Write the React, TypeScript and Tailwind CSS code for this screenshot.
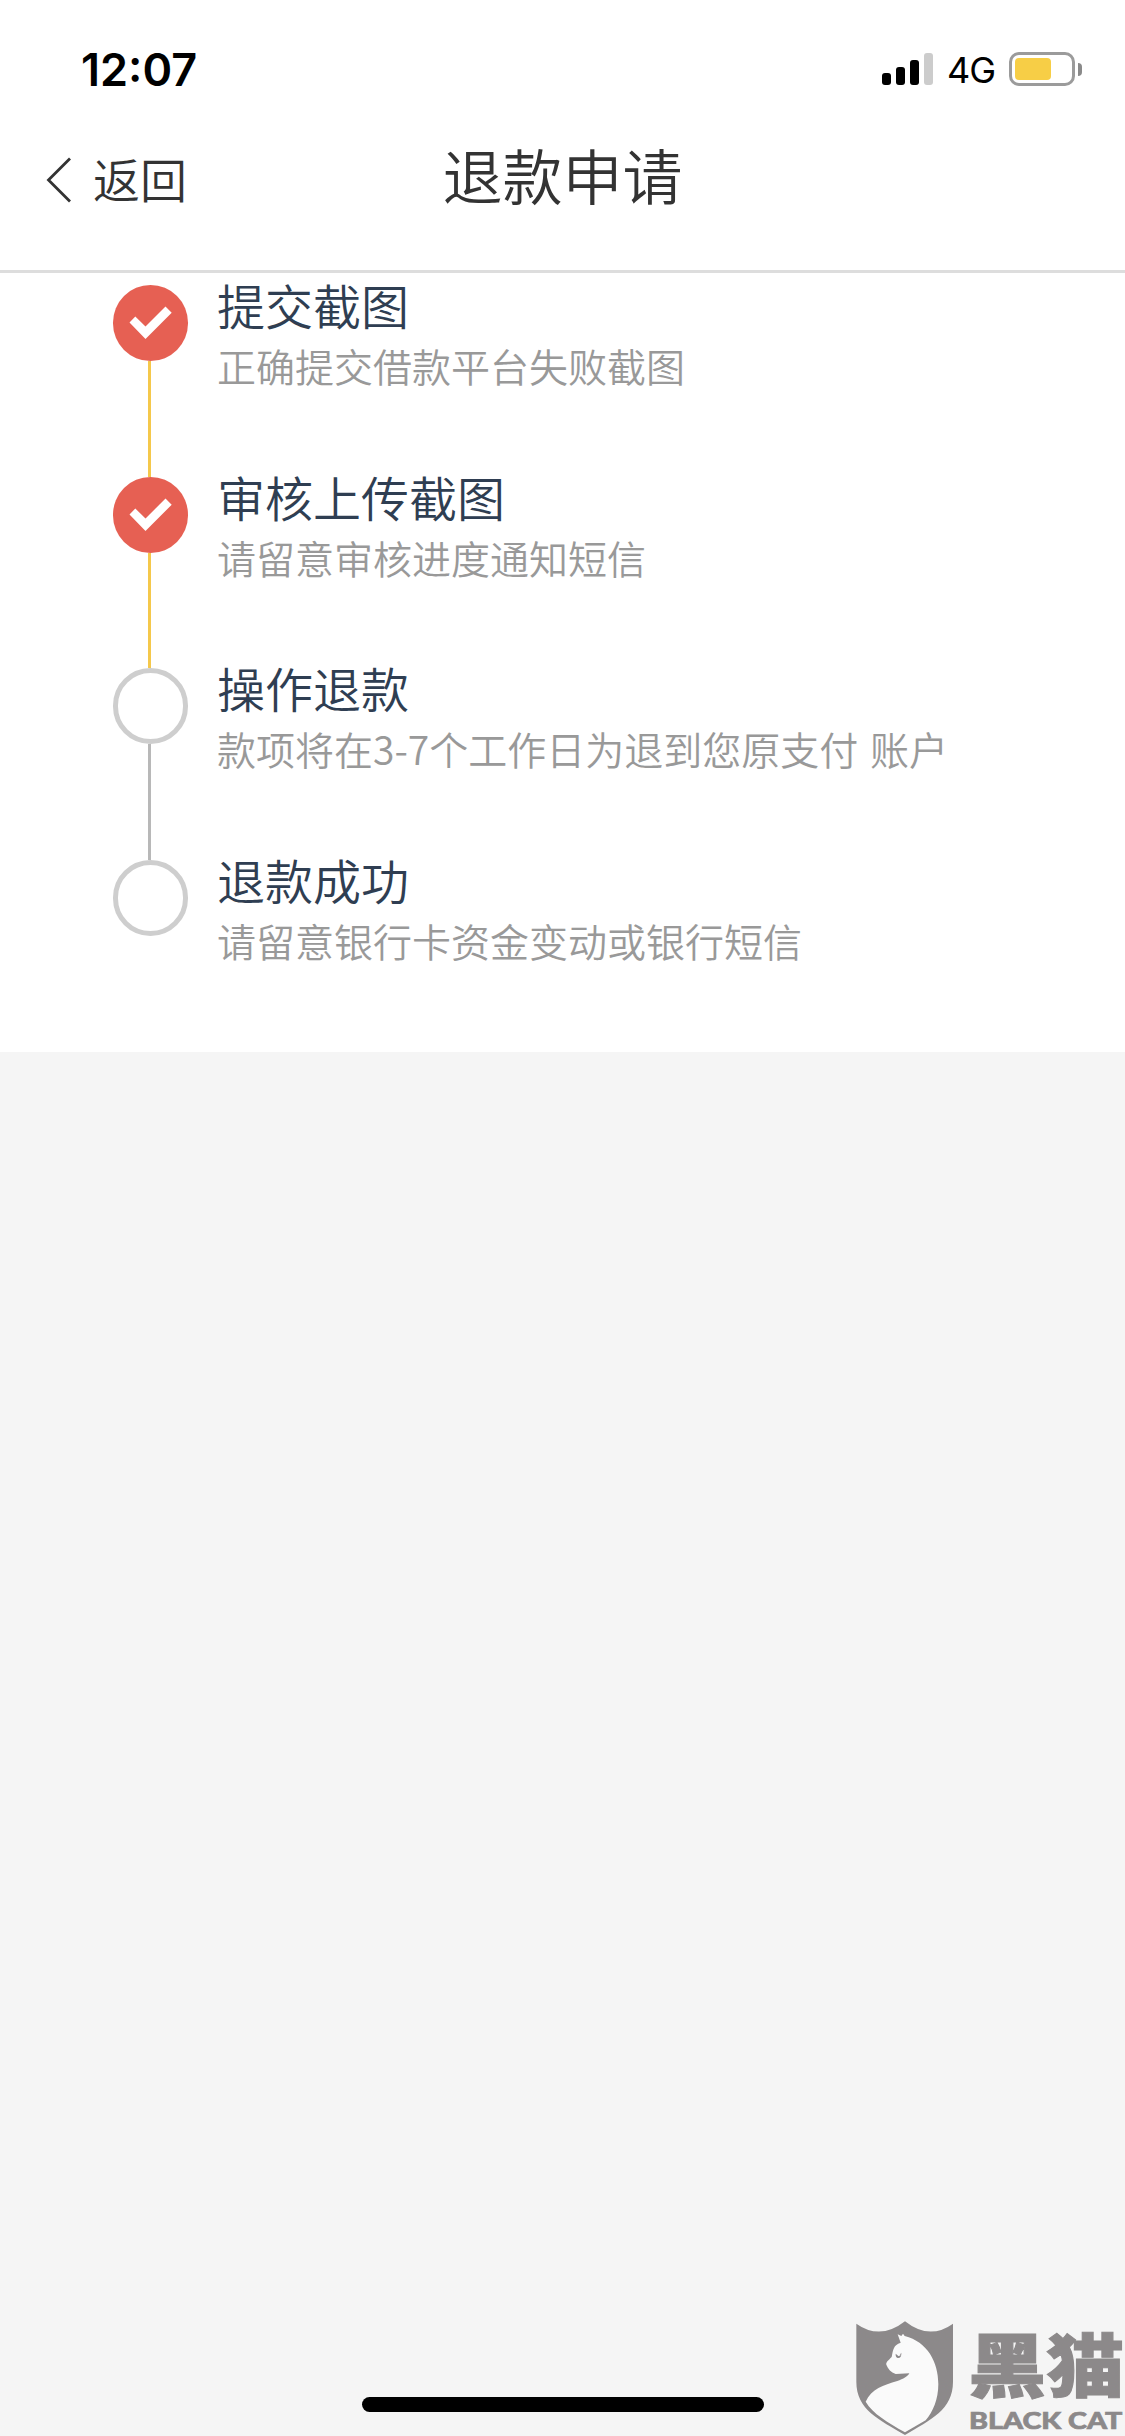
import clsx from "clsx";

type Step = {
  title: string;
  note: string;
  done: boolean;
};

const steps: Step[] = [
  { title: "提交截图", note: "正确提交借款平台失败截图", done: true },
  { title: "审核上传截图", note: "请留意审核进度通知短信", done: true },
  { title: "操作退款", note: "款项将在3-7个工作日为退到您原支付 账户", done: false },
  { title: "退款成功", note: "请留意银行卡资金变动或银行短信", done: false },
];

function StatusBar() {
  return (
    <div className="flex h-[138px] items-center justify-between pr-[43px] pl-[81px] font-['Inter',sans-serif] text-black">
      <span className="text-[45px] leading-none font-semibold">12:07</span>
      <div className="flex items-center">
        {/* Signal strength */}
        <div className="flex h-8 items-end gap-[5px]">
          <div className="h-3 w-[9px] rounded-[3px] bg-black" />
          <div className="h-[18px] w-[9px] rounded-[3px] bg-black" />
          <div className="h-[25px] w-[9px] rounded-[3px] bg-black" />
          <div className="h-8 w-[9px] rounded-[3px] bg-[#cccccc]" />
        </div>
        <span className="ml-[14px] w-[62px] pt-[2px] text-[36px] leading-none font-normal tracking-[-1px]">
          4G
        </span>
        {/* Battery */}
        <div className="flex h-[34px] w-[66px] items-center rounded-[10px] border-[3px] border-[#9b9b9b] pl-[3px]">
          <div className="h-[22px] w-9 rounded-[4px] bg-[#f7ce46]" />
        </div>
        <div className="ml-[3px] h-[13px] w-1 rounded-r-full bg-[#8a8a8a]" />
      </div>
    </div>
  );
}

function NavBar() {
  return (
    <header className="grid h-[135px] grid-cols-3 border-b-[3px] border-[#dddddd] text-[#333333]">
      <button className="flex h-[84px] items-center pl-[46px]">
        <svg width="25" height="46" viewBox="0 0 25 46" fill="none">
          <path d="M24 1.5L2.5 23L24 44.5" stroke="currentColor" strokeWidth="2.8" />
        </svg>
        <span className="ml-[22px] pb-[6px] text-[47px] leading-none">返回</span>
      </button>
      <h1 className="h-[72px] text-center text-[60px] leading-[72px] whitespace-nowrap">
        退款申请
      </h1>
    </header>
  );
}

function StepMarker({ done }: { done: boolean }) {
  if (!done) {
    return (
      <div className="h-[76px] w-[75px] shrink-0 rounded-full border-[5px] border-[#cecece]" />
    );
  }
  return (
    <div className="h-[76px] w-[75px] shrink-0 rounded-full bg-[#e66053]">
      <svg className="h-full w-full" viewBox="0 0 75 76" fill="none">
        <path d="M16.5 37.5L22.3 31.5L32.5 41.5L52.5 21.5L58.7 27.7L32.5 54Z" fill="#fff" />
      </svg>
    </div>
  );
}

function StepRow({ step, last }: { step: Step; last: boolean }) {
  return (
    <li className={clsx("flex", !last && "h-[191.7px]")}>
      <div className="flex w-[75px] flex-col">
        <StepMarker done={step.done} />
        {!last && (
          <div
            className={clsx(
              "ml-[35px] w-[3px] grow",
              step.done ? "bg-[#f5c84b]" : "bg-[#b8b8b8]"
            )}
          />
        )}
      </div>
      <div className="-mt-[5px] ml-[29px]">
        <h2 className="text-[48px] leading-[48px] text-[#2f3e52]">{step.title}</h2>
        <p className="mt-[13px] text-[39px] leading-[48px] [word-spacing:3px] whitespace-nowrap text-[#999999]">
          {step.note}
        </p>
      </div>
    </li>
  );
}

function BlackCatMark() {
  return (
    <svg
      className="absolute right-0 bottom-0"
      width="285"
      height="136"
      viewBox="0 0 855 408"
      fill="#8c898a"
    >
      <path d="M49 71Q121 122 195 64Q268 122 339 71V245C339 330 272 358 195 405C118 358 49 330 49 245Z" />
      <path
        d="M173 103L184 108L189 101L194 108C262 125 295 186 295 252C295 298 279 335 257 361L195 397C142 366 99 342 77 305C95 266 130 256 172 243C190 237 203 230 208 220L167 222C153 217 144 207 139 194C137 187 146 180 155 171C160 147 160 136 182 128Z"
        fill="#fafafa"
      />
      <path d="M167 161L176 169L184 158Q185 175 173 174Q166 171 167 161Z" />
      <circle cx="179" cy="165" r="2.5" fill="#fafafa" />
      <text
        x="385"
        y="277"
        fontSize="208"
        fontWeight="900"
        stroke="#8c898a"
        strokeWidth="3"
        textLength="468"
        lengthAdjust="spacingAndGlyphs"
        className="font-['Noto_Sans_CJK_SC',sans-serif]"
      >
        黑猫
      </text>
      <text
        x="387"
        y="386"
        fontSize="68"
        fontWeight="900"
        stroke="#8c898a"
        strokeWidth="2"
        textLength="460"
        lengthAdjust="spacingAndGlyphs"
        className="font-['Lato',sans-serif]"
      >
        BLACK CAT
      </text>
    </svg>
  );
}

export default function App() {
  return (
    <div className="relative h-[2436px] w-[1125px] overflow-hidden bg-[#f5f5f5] font-['Noto_Sans_CJK_SC',sans-serif] font-[350]">
      <div className="h-[1052px] bg-white">
        <StatusBar />
        <NavBar />
        <ol className="pt-3 pl-[113px]">
          {steps.map((step, i) => (
            <StepRow key={step.title} step={step} last={i === steps.length - 1} />
          ))}
        </ol>
      </div>

      <BlackCatMark />

      {/* Home indicator */}
      <div className="absolute bottom-6 left-[362px] h-[15px] w-[402px] rounded-full bg-black" />
    </div>
  );
}
